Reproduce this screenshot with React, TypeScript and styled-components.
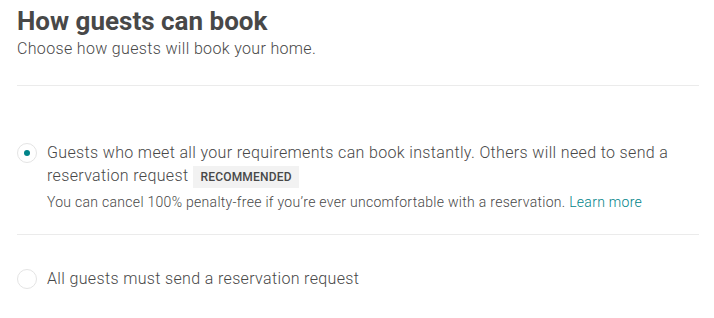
import React from 'react';
import styled, { createGlobalStyle } from 'styled-components';

const GlobalStyle = createGlobalStyle`
  body {
    margin: 0;
    background: #ffffff;
    font-family: Roboto, 'Liberation Sans', sans-serif;
    color: #484848;
  }
`;

const Page = styled.div`
  width: 682px;
  padding: 4px 15px 0 17px;
`;

const Title = styled.h1`
  margin: 0;
  font-size: 26px;
  line-height: 34px;
  font-weight: 700;
  color: #484848;
`;

const Subtitle = styled.div`
  font-size: 16px;
  line-height: 22px;
  font-weight: 300;
  letter-spacing: 0.34px;
  margin-bottom: 25px;
`;

const Divider = styled.hr`
  border: 0;
  border-top: 1px solid #ebebeb;
  margin: 0;
`;

const Option = styled.label<{ $top: number; $bottom: number }>`
  display: flex;
  align-items: flex-start;
  gap: 10px;
  padding: ${(p) => p.$top}px 0 ${(p) => p.$bottom}px;
  cursor: pointer;
`;

const Radio = styled.span<{ $checked?: boolean }>`
  flex: 0 0 auto;
  width: 18px;
  height: 18px;
  margin-top: 2px;
  border: 1px solid #e4e4e4;
  border-radius: 50%;
  display: flex;
  align-items: center;
  justify-content: center;

  &::after {
    content: '';
    width: 6px;
    height: 6px;
    border-radius: 50%;
    background: ${(p) => (p.$checked ? '#008489' : 'transparent')};
  }
`;

const OptionBody = styled.div`
  display: flex;
  flex-direction: column;
`;

const OptionText = styled.div`
  font-size: 16px;
  line-height: 23px;
  font-weight: 300;
  letter-spacing: 0.35px;
`;

const Badge = styled.span`
  display: inline-block;
  margin-left: 5px;
  padding: 2px 7px;
  background: #f2f2f2;
  font-size: 12px;
  line-height: 18px;
  font-weight: 500;
  letter-spacing: 0.2px;
  vertical-align: middle;
`;

const Note = styled.div`
  font-size: 14px;
  line-height: 18px;
  font-weight: 300;
  letter-spacing: 0.29px;
  margin-top: 5px;
`;

const Link = styled.a`
  color: #008489;
  text-decoration: none;
`;

export default function App() {
  return (
    <>
      <GlobalStyle />
      <Page>
        <Title>How guests can book</Title>
        <Subtitle>Choose how guests will book your home.</Subtitle>
        <Divider />
        <Option $top={55} $bottom={23}>
          <Radio $checked />
          <OptionBody>
            <OptionText>
              Guests who meet all your requirements can book instantly. Others will need to send a
              reservation request
              <Badge>RECOMMENDED</Badge>
            </OptionText>
            <Note>
              You can cancel 100% penalty-free if you’re ever uncomfortable with a reservation.{' '}
              <Link href="#">Learn more</Link>
            </Note>
          </OptionBody>
        </Option>
        <Divider />
        <Option $top={32} $bottom={20}>
          <Radio />
          <OptionText>All guests must send a reservation request</OptionText>
        </Option>
      </Page>
    </>
  );
}
